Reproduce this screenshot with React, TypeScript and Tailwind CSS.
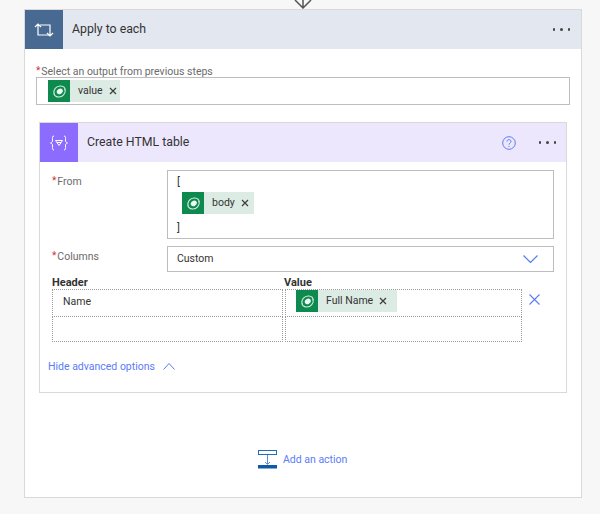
const font = { fontFamily: "Roboto, 'Noto Sans', sans-serif" }

function DataverseIcon() {
  return (
    <span className="flex h-[22px] w-[22px] shrink-0 items-center justify-center bg-[#0f8a4f]">
      <svg viewBox="0 0 16 16" className="h-[15px] w-[15px]" fill="none" stroke="#d5efe0">
        <path d="M2.200 10.800C.8 6.500 4.500 1.800 9.300 2.200c2.800.2 4.700 2.200 4.700 4.500" strokeWidth="1.100" />
        <path d="M13.800 5.200C15.200 9.500 11.500 14.200 6.700 13.800c-2.600-.2-4.300-1.800-4.600-3.800" strokeWidth="1.100" />
        <ellipse cx="8.300" cy="7.800" rx="3.400" ry="2.700" transform="rotate(-35 8.300 7.800)" fill="#eef9f3" stroke="none" />
      </svg>
    </span>
  )
}

function SmallX() {
  return (
    <svg className="ml-[6px] shrink-0" width="8" height="8" viewBox="0 0 8 8" fill="none" stroke="#3d3d3d" strokeWidth="1.200">
      <path d="M1 1l6 6M7 1L1 7" />
    </svg>
  )
}

function Chip({ label, width }: { label: string; width: string }) {
  return (
    <span className={`flex h-[22px] items-center bg-[#dcece4] text-[10.5px] text-[#333] ${width}`}>
      <DataverseIcon />
      <span className="ml-[8px] whitespace-nowrap">{label}</span>
      <SmallX />
    </span>
  )
}

function Dots() {
  return (
    <span className="flex items-center gap-[5px]">
      <span className="h-[2.500px] w-[2.500px] rounded-full bg-[#444]" />
      <span className="h-[2.500px] w-[2.500px] rounded-full bg-[#444]" />
      <span className="h-[2.500px] w-[2.500px] rounded-full bg-[#444]" />
    </span>
  )
}

function Req({ children }: { children: string }) {
  return (
    <span className="flex items-start text-[10.5px] leading-[13px] text-[#6b6b6b]">
      <span className="mr-[1px] text-[10px] leading-[11px] text-[#d13438]">*</span>
      {children}
    </span>
  )
}

export default function App() {
  return (
    <div style={font} className="h-[514px] w-[600px] overflow-hidden bg-[#f7f7f7]">
      {/* connector arrow coming from the step above */}
      <div className="flex h-[9px] justify-center pl-[6px]">
        <svg width="20" height="9" viewBox="0 0 20 9" fill="none" stroke="#555" strokeWidth="1.500">
          <path d="M2 0l8 8 8-8M10 8V0" />
        </svg>
      </div>

      <div className="ml-[24px] h-[489px] w-[558px] border border-[#d9d9d9] bg-white">
        <header className="flex h-[39px] items-center bg-[#e3e7ef] pr-[11px]">
          <span className="flex h-[39px] w-[38px] items-center justify-center bg-[#486991]">
            <svg width="20" height="18" viewBox="0 0 20 18" fill="none" stroke="#fff" strokeWidth="1.200">
              <path d="M1 6l3-3 3 3M4 3.500V14h11" />
              <path d="M19 12l-3 3-3-3M16 14.500V4H6" />
            </svg>
          </span>
          <span className="ml-[9px] text-[12.3px] text-[#333]">Apply to each</span>
          <span className="ml-auto">
            <Dots />
          </span>
        </header>

        <div className="px-[11px]">
          <div className="mt-[16px] flex h-[12px] items-center">
            <Req>Select an output from previous steps</Req>
          </div>
          <div className="flex h-[28px] w-[534px] items-center border border-[#bdbdbd] pl-[11px]">
            <Chip label="value" width="w-[72px]" />
          </div>

          <section className="mt-[17px] ml-[3px] h-[271px] w-[528px] border border-[#d9d9d9]">
            <header className="flex h-[39px] items-center bg-[#ede7fd] pr-[10px]">
              <span className="flex h-[39px] w-[38px] items-center justify-center bg-[#8c6cff] text-white">
                <svg width="20" height="16" viewBox="0 0 20 16" fill="none" stroke="#fff" strokeWidth="1">
                  <path d="M5 1C3 1 3.500 3 3.500 5S3.500 7 1.500 8c2 1 2 1 2 3s-.5 4 1.500 4" />
                  <path d="M15 1c2 0 1.500 2 1.500 4s0 2 2 3c-2 1-2 1-2 3s.5 4-1.500 4" />
                  <path d="M6.500 5.500h7L10 10.500zM8 7.500h4" />
                </svg>
              </span>
              <span className="ml-[9px] text-[12.3px] text-[#333]">Create HTML table</span>
              <svg className="ml-auto mr-[23px]" width="14" height="14" viewBox="0 0 14 14" fill="none" stroke="#5b7cf7">
                <circle cx="7" cy="7" r="6.300" />
                <path d="M5 5.500C5 3 9 3 9 5.500 9 7 7 7 7 8.700M7 10v1" />
              </svg>
              <Dots />
            </header>

            <div className="px-[12px]">
              <div className="mt-[8px] flex">
                <div className="w-[115px] pt-[5px]">
                  <Req>From</Req>
                </div>
                <div className="flex h-[69px] w-[387px] flex-col border border-[#bdbdbd] pl-[9px] text-[11px] text-[#333]">
                  <span className="mt-[4px] h-[14px] leading-[14px]">[</span>
                  <span className="ml-[5px] mt-[3px]">
                    <Chip label="body" width="w-[72px]" />
                  </span>
                  <span className="mt-[7px] leading-[14px]">]</span>
                </div>
              </div>

              <div className="mt-[7px] flex">
                <div className="w-[115px] pt-[4px]">
                  <Req>Columns</Req>
                </div>
                <div className="flex h-[26px] w-[387px] items-center justify-between border border-[#bdbdbd] pl-[9px] pr-[15px] text-[10.5px] text-[#333]">
                  Custom
                  <svg width="15" height="8" viewBox="0 0 15 8" fill="none" stroke="#5b7cf7" strokeWidth="1.200">
                    <path d="M.5.500l7 7 7-7" />
                  </svg>
                </div>
              </div>

              <div className="mt-[4px] flex">
                <div className="w-[232px] text-[11px] font-bold leading-[13px] text-[#333]">Header</div>
                <div className="text-[11px] font-bold leading-[13px] text-[#333]">Value</div>
              </div>

              <div className="flex items-start">
                <div className="grid grid-cols-[231px_237px] gap-x-[2px]">
                  <div className="flex h-[28px] items-start border border-dotted border-[#9a9a9a] pl-[10px] pt-[4px] text-[10.5px] text-[#333]">
                    Name
                  </div>
                  <div className="flex h-[28px] items-start border border-dotted border-[#9a9a9a] pl-[10px]">
                    <Chip label="Full Name" width="w-[101px]" />
                  </div>
                  <div className="h-[25px] border border-t-0 border-dotted border-[#9a9a9a]" />
                  <div className="h-[25px] border border-t-0 border-dotted border-[#9a9a9a]" />
                </div>
                <svg className="ml-[7px] mt-[5px]" width="11" height="11" viewBox="0 0 11 11" fill="none" stroke="#5b7cf7" strokeWidth="1.100">
                  <path d="M.5.500l10 10M10.500.500l-10 10" />
                </svg>
              </div>

              <div className="-ml-[4px] mt-[17px] flex items-center text-[10.5px] text-[#5b7cf7]">
                Hide advanced options
                <svg className="ml-[8px]" width="12" height="7" viewBox="0 0 12 7" fill="none" stroke="#5b7cf7" strokeWidth="1">
                  <path d="M.5 6.500l5.500-6 5.500 6" />
                </svg>
              </div>
            </div>
          </section>

          <div className="mt-[57px] flex items-center pl-[222px]">
            <svg width="19" height="19" viewBox="0 0 19 19" fill="none">
              <rect x="0.500" y="0.500" width="18" height="4" stroke="#1e6fb8" />
              <path d="M9.500 5v9M7 12l2.500 2.500L12 12" stroke="#5f93c7" />
              <rect x="0" y="15" width="19" height="3.500" fill="#0f5aa8" />
            </svg>
            <span className="ml-[6px] text-[10.5px] text-[#5b7cf7]">Add an action</span>
          </div>
        </div>
      </div>
    </div>
  )
}
